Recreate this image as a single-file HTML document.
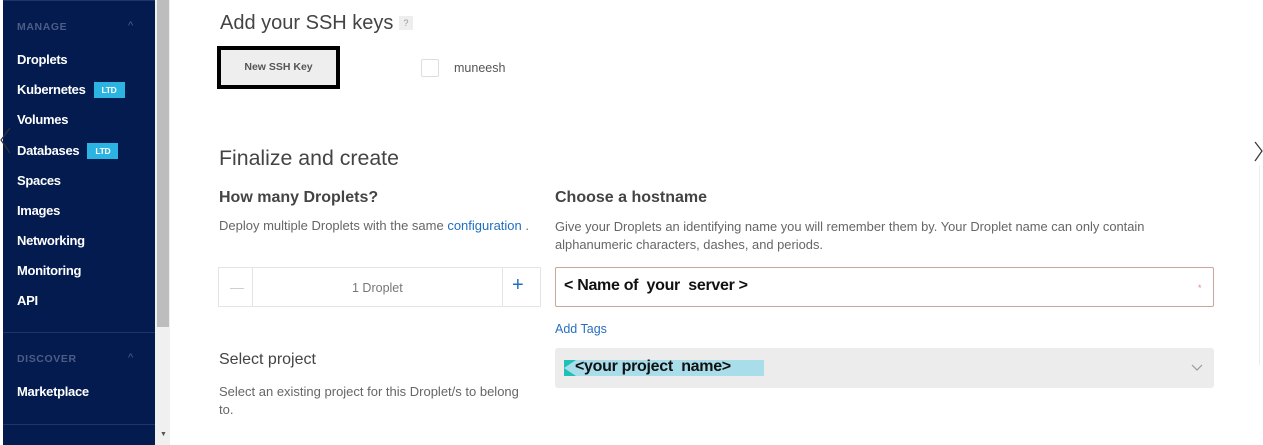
<!DOCTYPE html>
<html><head><style>
*{margin:0;padding:0;box-sizing:border-box}
body{width:1263px;height:445px;background:#fff;position:relative;overflow:hidden;font-family:"Liberation Sans",sans-serif;color:#444}
.a{position:absolute;white-space:nowrap}
.sb{position:absolute;left:3px;top:0;width:152px;height:445px;background:#031b4e}
.nav{position:absolute;left:17px;color:#fff;font-size:13px;font-weight:bold;letter-spacing:-0.3px}
.hd{position:absolute;left:17px;color:#4e5d87;font-size:10.5px;font-weight:bold;letter-spacing:0.6px}
.car{position:absolute;left:128px;color:#4e5d87;font-size:11px}
.ltd{display:inline-block;background:#2bb4e2;color:#fff;font-size:8.5px;padding:3px 8px;margin-left:8px;vertical-align:1px}
.line{position:absolute;left:3px;width:152px;height:1px;background:#1e3566}
</style></head><body>
<div class="sb"></div>
<div class="line" style="top:0"></div>
<div class="hd" style="top:21px">MANAGE</div><div class="car" style="top:20px">^</div>
<div class="nav" style="top:52px">Droplets</div>
<div class="nav" style="top:82px">Kubernetes<span class="ltd">LTD</span></div>
<div class="nav" style="top:112px">Volumes</div>
<div class="nav" style="top:143px">Databases<span class="ltd">LTD</span></div>
<div class="nav" style="top:173px">Spaces</div>
<div class="nav" style="top:203px">Images</div>
<div class="nav" style="top:233px">Networking</div>
<div class="nav" style="top:263px">Monitoring</div>
<div class="nav" style="top:293px">API</div>
<div class="line" style="top:332px"></div>
<div class="hd" style="top:353px">DISCOVER</div><div class="car" style="top:352px">^</div>
<div class="nav" style="top:384px">Marketplace</div>
<div class="line" style="top:424px"></div>
<div class="a" style="left:155px;top:0;width:15px;height:445px;background:#f0f0f0"></div>
<div class="a" style="left:157px;top:0;width:12px;height:327px;background:#bdbdbd"></div>
<div class="a" style="left:160px;top:431px;font-size:7px;color:#555">▼</div>
<svg class="a" style="left:0;top:126px" width="12" height="30"><path d="M10 2 L1 14 L10 27" fill="none" stroke="#333" stroke-width="1.2"/></svg>
<svg class="a" style="left:1254px;top:140px" width="9" height="24"><path d="M1 2 L8 11 L1 21" fill="none" stroke="#333" stroke-width="1.2"/></svg>
<div class="a" style="left:1259px;top:165px;width:1px;height:200px;background:#eee"></div>

<div class="a" style="left:220px;top:12px;font-size:20px;color:#444">Add your SSH keys <span style="display:inline-block;background:#eee;color:#999;font-size:9px;width:14px;height:14px;text-align:center;line-height:14px;vertical-align:3px">?</span></div>
<div class="a" style="left:217px;top:46px;width:123px;height:43px;border:4px solid #000;background:#eee;font-size:10.5px;font-weight:bold;color:#555;text-align:center;line-height:35px">New SSH Key</div>
<div class="a" style="left:421px;top:59px;width:18px;height:18px;border:1px solid #ddd;border-radius:2px"></div>
<div class="a" style="left:454px;top:61px;font-size:12.5px;color:#555">muneesh</div>

<div class="a" style="left:219px;top:146px;font-size:21.3px;color:#444">Finalize and create</div>
<div class="a" style="left:219px;top:189px;font-size:16px;font-weight:bold;color:#444">How many Droplets?</div>
<div class="a" style="left:219px;top:218px;font-size:13px;color:#666">Deploy multiple Droplets with the same <span style="color:#1f6ec1">configuration</span> .</div>
<div class="a" style="left:555px;top:189px;font-size:16px;font-weight:bold;color:#444">Choose a hostname</div>
<div class="a" style="left:555px;top:218px;font-size:12.9px;color:#666;line-height:18px">Give your Droplets an identifying name you will remember them by. Your Droplet name can only contain<br>alphanumeric characters, dashes, and periods.</div>

<div class="a" style="left:218px;top:267px;width:323px;height:40px;border:1px solid #e4e4e4"></div>
<div class="a" style="left:252px;top:268px;width:1px;height:38px;background:#e4e4e4"></div>
<div class="a" style="left:502px;top:268px;width:1px;height:38px;background:#e4e4e4"></div>
<div class="a" style="left:230px;top:279px;font-size:14px;color:#ccc">—</div>
<div class="a" style="left:352px;top:281px;font-size:12.5px;color:#777">1 Droplet</div>
<div class="a" style="left:512px;top:274px;font-size:20px;color:#1f6ec1">+</div>

<div class="a" style="left:555px;top:267px;width:659px;height:40px;border:1px solid #c9a79a;border-radius:2px"></div>
<div class="a" style="left:564px;top:277px;font-size:16px;font-weight:bold;color:#111;letter-spacing:-0.3px">&lt; Name of&nbsp; your&nbsp; server &gt;</div>
<div class="a" style="left:1198px;top:283px;font-size:9px;color:#d88">*</div>
<div class="a" style="left:555px;top:322px;font-size:12.5px;color:#2a6fbf">Add Tags</div>
<div class="a" style="left:219px;top:351px;font-size:16px;color:#444">Select project</div>
<div class="a" style="left:219px;top:383px;font-size:13px;color:#666;line-height:18px">Select an existing project for this Droplet/s to belong<br>to.</div>
<div class="a" style="left:555px;top:348px;width:659px;height:40px;background:#ececec;border-radius:3px"></div>
<div class="a" style="left:564px;top:360px;width:200px;height:16px;background:#a9dde9"></div>
<div class="a" style="left:564px;top:360px;width:0;height:0;border-top:8px solid #20c0b8;border-bottom:8px solid #20c0b8;border-right:12px solid transparent"></div>
<div class="a" style="left:575px;top:358px;font-size:16px;font-weight:bold;color:#111;letter-spacing:-0.3px">&lt;your project&nbsp; name&gt;</div>
<svg class="a" style="left:1191px;top:364px" width="12" height="8"><path d="M1 1 L6 6 L11 1" fill="none" stroke="#999" stroke-width="1.2"/></svg>
</body></html>
